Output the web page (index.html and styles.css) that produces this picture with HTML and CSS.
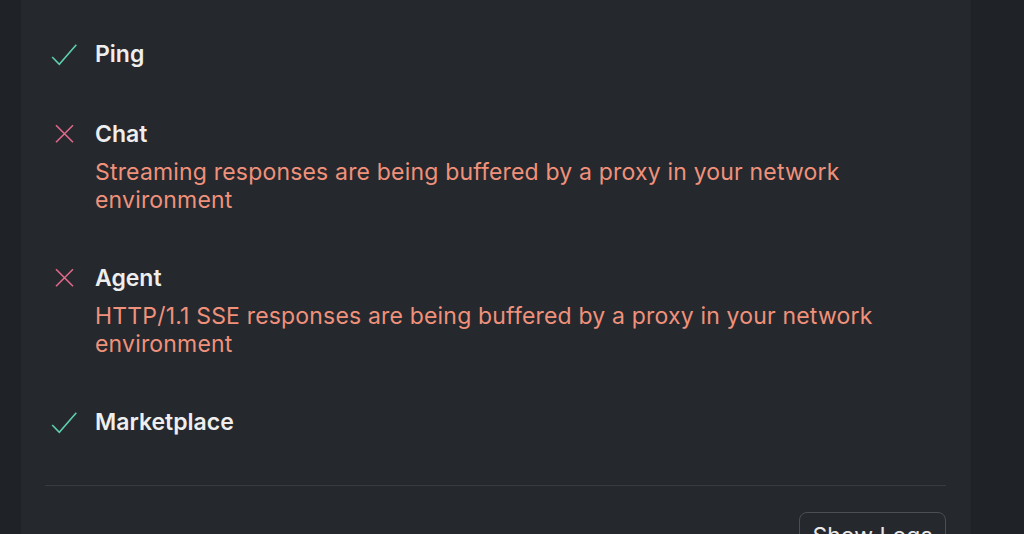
FILE: index.html
```html
<!DOCTYPE html>
<html>
<head>
<meta charset="utf-8">
<link rel="stylesheet" href="styles.css">
</head>
<body>
<div class="page">
  <div class="panel">
    <ul class="checks">
      <li class="check">
        <span class="icon ok"><svg viewBox="0 0 26 28" width="26" height="28"><path d="M1.2 17 L8.3 24.3 L25.3 4.8" fill="none" stroke="currentColor" stroke-width="1.6"/></svg></span>
        <div class="body"><div class="title">Ping</div></div>
      </li>
      <li class="check">
        <span class="icon fail"><svg viewBox="0 0 26 28" width="26" height="28"><path d="M5 5.2 L22 22.2 M22 5.2 L5 22.2" fill="none" stroke="currentColor" stroke-width="1.6"/></svg></span>
        <div class="body"><div class="title">Chat</div><div class="error">Streaming responses are being buffered by a proxy in your network environment</div></div>
      </li>
      <li class="check">
        <span class="icon fail"><svg viewBox="0 0 26 28" width="26" height="28"><path d="M5 5.2 L22 22.2 M22 5.2 L5 22.2" fill="none" stroke="currentColor" stroke-width="1.6"/></svg></span>
        <div class="body"><div class="title">Agent</div><div class="error">HTTP/1.1 SSE responses are being buffered by a proxy in your network environment</div></div>
      </li>
      <li class="check">
        <span class="icon ok"><svg viewBox="0 0 26 28" width="26" height="28"><path d="M1.2 17 L8.3 24.3 L25.3 4.8" fill="none" stroke="currentColor" stroke-width="1.6"/></svg></span>
        <div class="body"><div class="title">Marketplace</div></div>
      </li>
    </ul>
    <div class="divider"></div>
    <div class="actions"><button class="btn">Show Logs</button></div>
  </div>
</div>
</body>
</html>
```
FILE: styles.css
```css
html, body { margin: 0; padding: 0; }
body {
  background: #1f2226;
  font-family: Inter, "Noto Sans", sans-serif;
  width: 1024px;
  height: 534px;
  overflow: hidden;
}
.page {
  display: flex;
  padding-left: 21px;
}
.panel {
  width: 950px;
  box-sizing: border-box;
  background: #25282d;
  padding: 40px 24px 0;
  height: 534px;
  border-right: 1px solid #23262a;
}
.checks {
  list-style: none;
  margin: 0;
  padding: 0 0 0 6px;
  display: flex;
  flex-direction: column;
  gap: 52px;
}
.check {
  display: flex;
  gap: 18px;
  align-items: flex-start;
}
.icon {
  width: 26px;
  height: 28px;
  display: flex;
  flex: none;
}
.icon.ok { color: #5ecfb1; }
.icon.fail { color: #e0698a; }
.body { flex: 1; }
.title {
  font-size: 23px;
  line-height: 28px;
  font-weight: 600;
  color: #eeeeee;
}
.error {
  margin-top: 10px;
  margin-bottom: -2px;
  font-size: 23px;
  line-height: 28px;
  letter-spacing: 0.18px;
  color: #f0917b;
}
.divider {
  height: 1px;
  background: #383b41;
  margin-top: 49px;
}
.actions {
  display: flex;
  justify-content: flex-end;
  padding-top: 26px;
}
.btn {
  font-family: Inter, "Noto Sans", sans-serif;
  font-size: 23px;
  line-height: 28px;
  color: #e8e8e8;
  background: transparent;
  border: 1.5px solid #4a4e55;
  border-radius: 8px;
  padding: 9px 0;
  width: 147px;
  text-align: center;
}
```
